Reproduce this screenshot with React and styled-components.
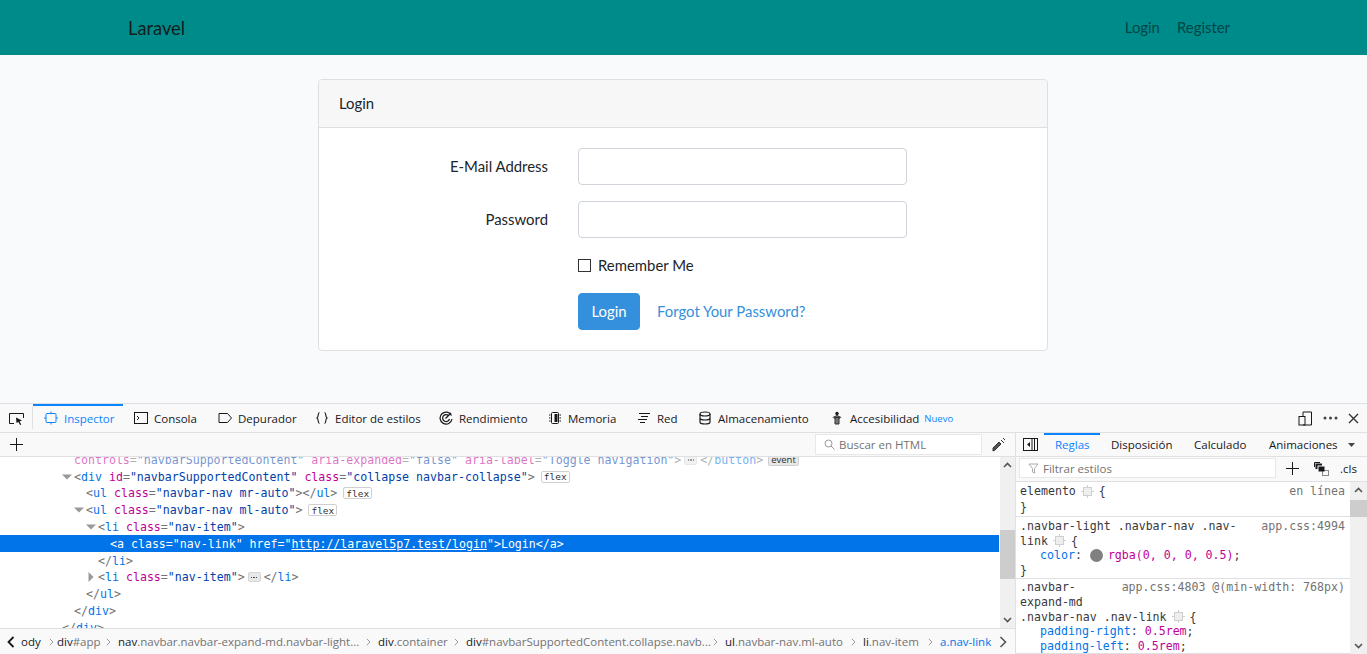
import React from "react";
import styled, { createGlobalStyle } from "styled-components";

const Global = createGlobalStyle`
  html, body { margin: 0; padding: 0; background: #f8fafc; }
  * { box-sizing: border-box; }
`;

const UI = `"Open Sans", "Noto Sans", sans-serif`;
const MONO = `"DejaVu Sans Mono", monospace`;
const PAGE = `Lato, "Noto Sans", sans-serif`;

const Shell = styled.div`
  width: 1367px;
  height: 654px;
  display: flex;
  flex-direction: column;
  overflow: hidden;
`;
const Page = styled.div`
  height: 403px;
  background: #f8fafc;
  font-family: ${PAGE};
  font-size: 14.9px;
  color: #212529;
`;
const Nav = styled.nav`
  height: 55px;
  background: #008b8b;
  padding: 0 137px 0 128px;
  display: flex;
  align-items: center;
  justify-content: space-between;
`;
const Brand = styled.a`
  font-size: 18.3px;
  color: #111d1d;
`;
const NavLinks = styled.div`
  display: flex;
  gap: 17px;
  padding-bottom: 2px;
`;
const NavLink = styled.a`
  color: #004545;
`;
const Card = styled.div`
  width: 730px;
  height: 272px;
  margin: 24px 0 0 318px;
  background: #fff;
  border: 1px solid #dfdfdf;
  border-radius: 4px;
  overflow: hidden;
`;
const CardHead = styled.div`
  height: 48px;
  padding: 0 20px 2px;
  display: flex;
  align-items: center;
  background: #f7f7f7;
  border-bottom: 1px solid #dfdfdf;
`;
const CardBody = styled.div`
  padding: 20px;
  display: flex;
  flex-direction: column;
  gap: 16px;
`;
const FormRow = styled.div`
  display: grid;
  grid-template-columns: 209px 329px;
  column-gap: 30px;
  align-items: center;
`;
const Label = styled.label`
  text-align: right;
  padding-bottom: 2px;
`;
const Input = styled.div`
  height: 37px;
  background: #fff;
  border: 1px solid #ced4da;
  border-radius: 4px;
`;
const CheckLine = styled.div`
  grid-column: 2;
  display: flex;
  align-items: center;
  gap: 7px;
  height: 23px;
  line-height: 21px;
`;
const Check = styled.span`
  width: 13px;
  height: 13px;
  border: 1px solid #333;
  background: #fff;
`;
const Actions = styled.div`
  grid-column: 2;
  display: flex;
  align-items: center;
  gap: 17px;
`;
const Button = styled.button`
  width: 62px;
  height: 37px;
  border: 1px solid #3490dc;
  border-radius: 4px;
  background: #3490dc;
  color: #fff;
  font: 14.9px ${PAGE};
  padding: 0 0 2px;
`;
const LinkText = styled.a`
  color: #3490dc;
  padding-bottom: 2px;
`;

const Tools = styled.div`
  flex: 1;
  min-height: 0;
  display: flex;
  flex-direction: column;
  font-family: ${UI};
  font-size: 11.5px;
  color: #0c0c0d;
  background: #fff;
  border-top: 1px solid #e0e0e2;
`;
const TabBar = styled.div`
  height: 29px;
  flex: none;
  display: flex;
  align-items: stretch;
  background: #f9f9fa;
  border-bottom: 1px solid #e0e0e2;
`;
const Picker = styled.div`
  width: 33px;
  display: flex;
  align-items: center;
  padding-left: 8px;
  border-right: 1px solid #e0e0e2;
  margin: 3px 0;
`;
const Tab = styled.div`
  width: ${(p) => p.$w}px;
  flex: none;
  display: flex;
  align-items: center;
  gap: 6px;
  padding-left: ${(p) => p.$pad ?? 11}px;
  margin-left: ${(p) => p.$ml ?? 0}px;
  white-space: nowrap;
  color: ${(p) => (p.$on ? "#0a84ff" : "#18181a")};
  box-shadow: ${(p) => (p.$on ? "inset 0 2px 0 #0a84ff" : "none")};
`;
const IconSlot = styled.span`
  width: ${(p) => p.$w || 14}px;
  margin-left: ${(p) => p.$ml ?? 0}px;
  flex: none;
  display: flex;
  align-items: center;
  justify-content: center;
`;
const Nuevo = styled.span`
  margin-left: -1px;
  font-size: 9.5px;
  color: #0a84ff;
`;
const TabEnd = styled.div`
  margin-left: auto;
  display: flex;
  align-items: center;
  gap: 10px;
  padding-right: 8px;
`;
const Split = styled.div`
  flex: 1;
  min-height: 0;
  display: grid;
  grid-template-columns: 1016px 1fr;
`;
const LeftPane = styled.div`
  display: flex;
  flex-direction: column;
  min-height: 0;
  border-right: 1px solid #e0e0e2;
`;
const Toolbar = styled.div`
  height: 24px;
  flex: none;
  display: flex;
  align-items: center;
  background: #f9f9fa;
  border-bottom: 1px solid #e0e0e2;
  padding-left: 10px;
`;
const SearchBox = styled.div`
  margin-left: 792px;
  width: 167px;
  height: 21px;
  background: #fff;
  border: 1px solid #e8e8ea;
  display: flex;
  align-items: center;
  gap: 4px;
  padding-left: 8px;
  color: #737373;
`;
const Dropper = styled.span`
  margin-left: 10px;
  display: flex;
`;
const MarkupArea = styled.div`
  flex: 1;
  min-height: 0;
  display: grid;
  grid-template-columns: 1fr 15px;
`;
const Markup = styled.div`
  overflow: hidden;
  font-family: ${MONO};
  font-size: 11.6px;
  background: #fff;
  padding-right: 1px;
`;
const MarkupList = styled.div`
  margin-top: -5.6px;
`;
const Row = styled.div`
  height: 16.8px;
  display: flex;
  align-items: center;
  padding-left: ${(p) => p.$x}px;
  background: ${(p) => (p.$sel ? "#0074e8" : "transparent")};
`;
const Code = styled.span`
  white-space: pre;
  display: inline-flex;
  align-items: center;
  opacity: ${(p) => (p.$dim ? 0.55 : 1)};
`;
const TOKEN = {
  p: "#737373",
  t: "#0074e8",
  n: "#c00096",
  v: "#003eaa",
  w: "#fff",
};
const Tok = styled.span`
  white-space: pre;
  color: ${(p) => TOKEN[p.$k]};
  text-decoration: ${(p) => (p.$u ? "underline" : "none")};
`;
const Twisty = styled.span`
  width: 12px;
  margin-left: -12px;
  display: flex;
  flex: none;
`;
const Badge = styled.span`
  margin-left: ${(p) => p.$ml ?? 6}px;
  height: 12px;
  display: inline-flex;
  align-items: center;
  padding: 0 2px;
  border: 1px solid #d0d0d0;
  border-radius: 2px;
  background: ${(p) => (p.$fill ? "#e8e8e8" : "#fff")};
  color: #333;
  font: 9.5px ${(p) => (p.$fill ? UI : MONO)};
`;
const Dots = styled.span`
  width: 13px;
  height: 10px;
  display: inline-flex;
  align-items: center;
  justify-content: center;
  gap: 1px;
  background: #e8e8e8;
  border: 1px solid #d4d4d4;
  border-radius: 2px;
  margin: 0 3px;
`;
const Dot = styled.i`
  width: 1.5px;
  height: 1.5px;
  background: #444;
`;
const ScrollTrack = styled.div`
  background: #f0f0f0;
  display: flex;
  flex-direction: column;
  align-items: center;
  justify-content: space-between;
  position: relative;
  padding: 5px 0;
`;
const Thumb = styled.div`
  position: absolute;
  left: 0;
  right: 0;
  top: ${(p) => p.$top}px;
  height: ${(p) => p.$h}px;
  background: #cdcdcd;
`;
const Crumbs = styled.div`
  height: 26px;
  flex: none;
  display: flex;
  align-items: center;
  background: #f9f9fa;
  border-top: 1px solid #e0e0e2;
  padding-left: 6px;
  white-space: nowrap;
`;
const Crumb = styled.span`
  width: ${(p) => p.$w}px;
  margin-left: ${(p) => p.$ml ?? 0}px;
  flex: none;
  color: #737373;
`;
const Strong = styled.span`
  color: ${(p) => (p.$blue ? "#0074e8" : "#18181a")};
`;
const Sep = styled.span`
  width: ${(p) => p.$w || 20}px;
  flex: none;
  display: flex;
  justify-content: center;
`;
const RightPane = styled.div`
  display: flex;
  flex-direction: column;
  min-height: 0;
`;
const SideTabs = styled.div`
  height: 24px;
  flex: none;
  display: flex;
  align-items: stretch;
  background: #f9f9fa;
  border-bottom: 1px solid #e0e0e2;
  padding-left: 7px;
`;
const Filter = styled.div`
  height: 25px;
  flex: none;
  display: flex;
  align-items: center;
  background: #f9f9fa;
  border-bottom: 1px solid #e0e0e2;
  padding: 0 0 2px 3px;
`;
const FilterBox = styled.div`
  width: 257px;
  height: 20px;
  background: #fff;
  border: 1px solid #e8e8ea;
  display: flex;
  align-items: center;
  gap: 4px;
  padding-left: 8px;
  color: #737373;
`;
const Cls = styled.span`
  margin-left: 11px;
  color: #18181a;
`;
const RulesArea = styled.div`
  flex: 1;
  min-height: 0;
  display: grid;
  grid-template-columns: 1fr 17px;
`;
const Rules = styled.div`
  overflow: hidden;
  font-family: ${MONO};
  font-size: 11.6px;
  color: #38383d;
`;
const Rule = styled.div`
  padding: ${(p) => p.$pad}px 5px ${(p) => p.$bottom ?? 0}px 4px;
  border-bottom: 1px solid #e0e0e2;
`;
const RuleLine = styled.div`
  display: flex;
  align-items: center;
  justify-content: ${(p) => (p.$decl ? "flex-start" : "space-between")};
  white-space: pre;
  height: 14.6px;
  margin-bottom: ${(p) => p.$after ?? 0}px;
  padding-left: ${(p) => (p.$decl ? 20 : 0)}px;
`;
const Sel = styled.span`
  display: inline-flex;
  align-items: center;
`;
const Prop = styled.span`
  color: #0074e8;
`;
const Val = styled.span`
  color: #c00096;
`;
const Src = styled.span`
  color: #737373;
`;
const Swatch = styled.i`
  width: 13px;
  height: 13px;
  border-radius: 50%;
  background: #808080;
  margin: 0 5px 0 1px;
`;

const Svg = ({ w = 14, h = 14, vb, children, c = "#18181a", sw = 1 }) => (
  <svg width={w} height={h} viewBox={vb || `0 0 ${w} ${h}`} fill="none" stroke={c} strokeWidth={sw}>{children}</svg>
);
const Caret = ({ dir, c = "#999" }) => (
  <svg width="10" height="10" viewBox="0 0 10 10" fill={c}>
    {dir === "down" ? <path d="M0 2.500h10L5 7.500z" /> : <path d="M2.500 0v10L7.500 5z" />}
  </svg>
);
const Chev = ({ dir = "up", c = "#555" }) => (
  <svg width="9" height="6" viewBox="0 0 9 6" fill="none" stroke={c} strokeWidth="1.6">
    {dir === "up" ? <path d="M1 5l3.500-3.500L8 5" /> : <path d="M1 1l3.500 3.500L8 1" />}
  </svg>
);
const SepIcon = () => (
  <svg width="5" height="8" viewBox="0 0 5 8" fill="none" stroke="#9a9a9a" strokeWidth="1"><path d="M.8.8L4 4 .8 7.2" /></svg>
);
const Node = () => (
  <svg width="13" height="13" viewBox="0 0 13 13" fill="none" stroke="#cfcfcf" style={{ margin: "0 5px" }}>
    <rect x="2.500" y="2.500" width="8" height="8" fill="#eee" /><path d="M6.500 0v2.500M6.500 10.500V13M0 6.500h2.500M10.500 6.500H13" />
  </svg>
);
const Glass = () => (
  <Svg w={11} h={11} c="#999"><circle cx="4.500" cy="4.500" r="3.500" /><path d="M7 7l3.500 3.500" /></Svg>
);
const Plus = () => (
  <Svg w={13} h={13} c="#18181a"><path d="M6.500 0v13M0 6.500h13" /></Svg>
);

const n = (t) => <Tok $k="n">{t}</Tok>;
const v = (t) => <Tok $k="v">{t}</Tok>;
const p = (t) => <Tok $k="p">{t}</Tok>;
const t = (s) => <Tok $k="t">{s}</Tok>;
const Three = () => <Dots><Dot /><Dot /><Dot /></Dots>;
const Sp = () => <Tok $k="p">{" "}</Tok>;

export default function App() {
  return (
    <Shell>
      <Global />
      <Page>
        <Nav>
          <Brand>Laravel</Brand>
          <NavLinks><NavLink>Login</NavLink><NavLink>Register</NavLink></NavLinks>
        </Nav>
        <Card>
          <CardHead>Login</CardHead>
          <CardBody>
            <FormRow><Label>E-Mail Address</Label><Input /></FormRow>
            <FormRow><Label>Password</Label><Input /></FormRow>
            <FormRow><CheckLine><Check /><span>Remember Me</span></CheckLine></FormRow>
            <FormRow>
              <Actions><Button>Login</Button><LinkText>Forgot Your Password?</LinkText></Actions>
            </FormRow>
          </CardBody>
        </Card>
      </Page>
      <Tools>
        <TabBar>
          <Picker>
            <Svg w={17} h={15}><path d="M6 12.500H1.500v-10h14V7" /><path d="M8 6.500l6 3-2.500 1 1.800 3-1.200.6-1.700-3L8.500 12z" fill="#18181a" stroke="none" /></Svg>
          </Picker>
          <Tab $w={90} $on>
            <IconSlot><Svg c="#0a84ff"><rect x="2" y="2.500" width="10" height="9" rx="1" /><path d="M7 .5v2M7 11.500v2M0 7h2M12 7h2" /></Svg></IconSlot>Inspector
          </Tab>
          <Tab $w={84}>
            <IconSlot><Svg><rect x=".5" y="1.500" width="13" height="11" /><path d="M3 5l2 2-2 2" /></Svg></IconSlot>Consola
          </Tab>
          <Tab $w={98}>
            <IconSlot><Svg><path d="M1 2.500h8.500L13.500 7l-4 4.500H1z" /></Svg></IconSlot>Depurador
          </Tab>
          <Tab $w={123} $pad={10}>
            <IconSlot><Svg sw={1.1}><path d="M4.500 1.500C2.500 1.500 4 6 2 7 4 8 2.500 12.500 4.500 12.500M9.500 1.500C11.500 1.500 10 6 12 7 10 8 11.500 12.500 9.500 12.500" /></Svg></IconSlot>Editor de estilos
          </Tab>
          <Tab $w={109}>
            <IconSlot><Svg sw={1.2}><path d="M12.500 4.500A6 6 0 1 0 13 8" /><path d="M9.500 4.500A3.500 3.500 0 1 0 10.500 8" /><path d="M6.500 7.500L12 2" /></Svg></IconSlot>Rendimiento
          </Tab>
          <Tab $w={90}>
            <IconSlot><Svg><rect x="3.500" y="1.500" width="7" height="11" rx="1" /><path d="M1 4h1.500M1 7h1.500M1 10h1.500M11.500 4H13M11.500 7H13M11.500 10H13" /><rect x="7" y="3.500" width="2" height="7" fill="#18181a" /></Svg></IconSlot>Memoria
          </Tab>
          <Tab $w={61} $pad={10}>
            <IconSlot><Svg><path d="M2 2.500h11M4 5.500h7M1 8.500h9M3 11.500h5" /></Svg></IconSlot>Red
          </Tab>
          <Tab $w={133} $pad={10}>
            <IconSlot><Svg sw={1.2}><ellipse cx="7" cy="3" rx="5" ry="2" /><path d="M2 3v8c0 1.100 2.200 2 5 2s5-.9 5-2V3M2 7c0 1.100 2.200 2 5 2s5-.9 5-2" /></Svg></IconSlot>Almacenamiento
          </Tab>
          <Tab $w={150} $pad={9}>
            <IconSlot><Svg><circle cx="7" cy="2.500" r="1.700" fill="#18181a" stroke="none" /><path d="M2.800 6.500L7 4.500l4.200 2M4.800 6v2M9.200 6v2M5 6.500h4V13H5z" fill="#777" stroke="#333" /></Svg></IconSlot>Accesibilidad <Nuevo>Nuevo</Nuevo>
          </Tab>
          <TabEnd>
            <Svg w={15} h={15}><path d="M5 5V1h8.500v13H5" /><rect x="1" y="5.500" width="6" height="8.500" /></Svg>
            <Svg w={15} h={4} c="none"><circle cx="2" cy="2" r="1.500" fill="#444" /><circle cx="7.500" cy="2" r="1.500" fill="#444" /><circle cx="13" cy="2" r="1.500" fill="#444" /></Svg>
            <Svg w={11} h={11} c="#333" sw={1.4}><path d="M1 1l9 9M10 1l-9 9" /></Svg>
          </TabEnd>
        </TabBar>
        <Split>
          <LeftPane>
            <Toolbar>
              <Plus />
              <SearchBox><Glass />Buscar en HTML</SearchBox>
              <Dropper>
                <Svg w={14} h={15} c="#333"><path d="M1 14l2-1 6-6-2-2-6 6z" fill="#555" /><path d="M9 3l3 3M11 1l2 2" /></Svg>
              </Dropper>
            </Toolbar>
            <MarkupArea>
              <Markup>
                <MarkupList>
                  <Row $x={74}>
                    <Code $dim>{n("controls")}{p("=")}{v('"navbarSupportedContent"')}<Sp />{n("aria-expanded")}{p("=")}{v('"false"')}<Sp />{n("aria-label")}{p("=")}{v('"Toggle navigation"')}{p(">")}<Three />{p("</")}{t("button")}{p(">")}</Code><Badge $fill $ml={5}>event</Badge>
                  </Row>
                  <Row $x={74}><Twisty><Caret dir="down" /></Twisty><Code>{p("<")}{t("div")}<Sp />{n("id")}{p("=")}{v('"navbarSupportedContent"')}<Sp />{n("class")}{p("=")}{v('"collapse navbar-collapse"')}{p(">")}<Badge>flex</Badge></Code></Row>
                  <Row $x={86}><Code>{p("<")}{t("ul")}<Sp />{n("class")}{p("=")}{v('"navbar-nav mr-auto"')}{p("></")}{t("ul")}{p(">")}<Badge>flex</Badge></Code></Row>
                  <Row $x={86}><Twisty><Caret dir="down" /></Twisty><Code>{p("<")}{t("ul")}<Sp />{n("class")}{p("=")}{v('"navbar-nav ml-auto"')}{p(">")}<Badge>flex</Badge></Code></Row>
                  <Row $x={98}><Twisty><Caret dir="down" /></Twisty><Code>{p("<")}{t("li")}<Sp />{n("class")}{p("=")}{v('"nav-item"')}{p(">")}</Code></Row>
                  <Row $x={110} $sel><Code><Tok $k="w">{'<a class="nav-link" href="'}</Tok><Tok $k="w" $u>http://laravel5p7.test/login</Tok><Tok $k="w">{'">Login</a>'}</Tok></Code></Row>
                  <Row $x={98}><Code>{p("</")}{t("li")}{p(">")}</Code></Row>
                  <Row $x={98}><Twisty><Caret dir="right" /></Twisty><Code>{p("<")}{t("li")}<Sp />{n("class")}{p("=")}{v('"nav-item"')}{p(">")}<Three />{p("</")}{t("li")}{p(">")}</Code></Row>
                  <Row $x={86}><Code>{p("</")}{t("ul")}{p(">")}</Code></Row>
                  <Row $x={74}><Code>{p("</")}{t("div")}{p(">")}</Code></Row>
                  <Row $x={62}><Code>{p("</")}{t("div")}{p(">")}</Code></Row>
                </MarkupList>
              </Markup>
              <ScrollTrack>
                <Chev dir="up" /><Thumb $top={73} $h={49} /><Chev dir="down" />
              </ScrollTrack>
            </MarkupArea>
            <Crumbs>
              <Sep $w={9}><Svg w={8} h={12} c="#18181a" sw={1.8}><path d="M6.500 1L1.500 6l5 5" /></Svg></Sep>
              <Crumb $w={25} $ml={6}><Strong>ody</Strong></Crumb>
              <Sep $w={11}><SepIcon /></Sep>
              <Crumb $w={42}><Strong>div</Strong>#app</Crumb>
              <Sep $w={19}><SepIcon /></Sep>
              <Crumb $w={240}><Strong>nav</Strong>.navbar.navbar-expand-md.navbar-light...</Crumb>
              <Sep $w={20}><SepIcon /></Sep>
              <Crumb $w={68}><Strong>div</Strong>.container</Crumb>
              <Sep $w={20}><SepIcon /></Sep>
              <Crumb $w={239}><Strong>div</Strong>#navbarSupportedContent.collapse.navb...</Crumb>
              <Sep $w={20}><SepIcon /></Sep>
              <Crumb $w={118}><Strong>ul</Strong>.navbar-nav.ml-auto</Crumb>
              <Sep $w={20}><SepIcon /></Sep>
              <Crumb $w={57}><Strong>li</Strong>.nav-item</Crumb>
              <Sep $w={20}><SepIcon /></Sep>
              <Crumb $w={52}><Strong $blue>a.nav-link</Strong></Crumb>
              <Sep $w={22}><Svg w={8} h={12} c="#555" sw={1.6}><path d="M1.500 1l5 5-5 5" /></Svg></Sep>
            </Crumbs>
          </LeftPane>
          <RightPane>
            <SideTabs>
              <IconSlot $w={15}>
                <Svg w={15} h={13}><rect x=".5" y=".5" width="14" height="12" /><path d="M9 1v11M11.500 1v11" /><path d="M7 4v5L4 6.500z" fill="#18181a" stroke="none" /></Svg>
              </IconSlot>
              <Tab $w={56} $on $ml={6}>Reglas</Tab>
              <Tab $w={83}>Disposición</Tab>
              <Tab $w={75}>Calculado</Tab>
              <Tab $w={88}>Animaciones</Tab>
              <IconSlot $w={10}>
                <svg width="7" height="4" viewBox="0 0 7 4" fill="#444"><path d="M0 0h7L3.500 4z" /></svg>
              </IconSlot>
            </SideTabs>
            <Filter>
              <FilterBox>
                <Svg w={11} h={11} c="#aaa"><path d="M1 1h9L6.500 5.500V10l-2-1V5.500z" /></Svg>Filtrar estilos
              </FilterBox>
              <IconSlot $w={13} $ml={10}><Plus /></IconSlot>
              <IconSlot $w={16} $ml={14}>
                <Svg w={16} h={15}><path d="M1.500 6V1.500H7" /><path d="M3.500 8V3.500H9" strokeWidth="2" /><rect x="6" y="6" width="5" height="4" fill="#18181a" /><rect x="9.500" y="9.500" width="6" height="5" strokeDasharray="1 1" /></Svg>
              </IconSlot>
              <Cls>.cls</Cls>
            </Filter>
            <RulesArea>
              <Rules>
                <Rule $pad={2} $bottom={1}>
                  <RuleLine $after={1.600}><Sel>elemento<Node />{"{"}</Sel><Src>en línea</Src></RuleLine>
                  <RuleLine>{"}"}</RuleLine>
                </Rule>
                <Rule $pad={2} $bottom={1}>
                  <RuleLine><span>.navbar-light .navbar-nav .nav-</span><Src>app.css:4994</Src></RuleLine>
                  <RuleLine><Sel>link<Node />{"{"}</Sel></RuleLine>
                  <RuleLine $decl><Prop>color</Prop>{": "}<Swatch /><Val>rgba(0, 0, 0, 0.5)</Val>;</RuleLine>
                  <RuleLine>{"}"}</RuleLine>
                </Rule>
                <Rule $pad={1}>
                  <RuleLine><span>.navbar-</span><Src>app.css:4803 @(min-width: 768px)</Src></RuleLine>
                  <RuleLine>expand-md</RuleLine>
                  <RuleLine><Sel>.navbar-nav .nav-link<Node />{"{"}</Sel></RuleLine>
                  <RuleLine $decl><Prop>padding-right</Prop>{": "}<Val>0.5rem</Val>;</RuleLine>
                  <RuleLine $decl><Prop>padding-left</Prop>{": "}<Val>0.5rem</Val>;</RuleLine>
                </Rule>
              </Rules>
              <ScrollTrack>
                <Chev dir="up" /><Thumb $top={18} $h={17} /><Chev dir="down" />
              </ScrollTrack>
            </RulesArea>
          </RightPane>
        </Split>
      </Tools>
    </Shell>
  );
}
